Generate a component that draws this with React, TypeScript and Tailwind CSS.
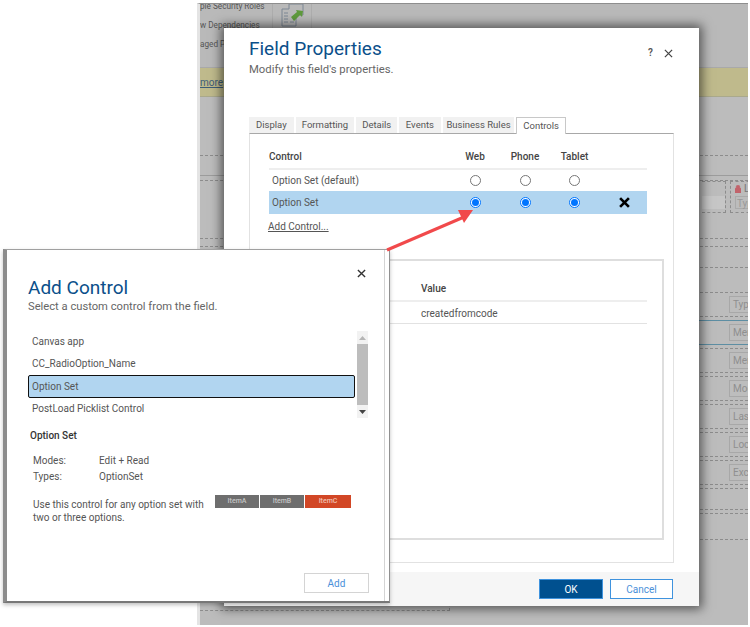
const font = { fontFamily: 'Roboto, "Open Sans", sans-serif' };

function Radio({ checked = false }: { checked?: boolean }) {
  if (checked) {
    return (
      <span className="flex h-[11px] w-[11px] items-center justify-center rounded-full border border-[#0075ff] bg-white">
        <span className="h-[7px] w-[7px] rounded-full bg-[#0075ff]" />
      </span>
    );
  }
  return <span className="block h-[11px] w-[11px] rounded-full border border-[#767676] bg-white" />;
}

function Close({ size = 9, width = 1.4, color = "#444" }: { size?: number; width?: number; color?: string }) {
  return (
    <svg width={size} height={size} viewBox="0 0 10 10" fill="none" stroke={color} strokeWidth={width}>
      <path d="M1 1L9 9M9 1L1 9" />
    </svg>
  );
}

function Tab({ label, width, active = false }: { label: string; width: string; active?: boolean }) {
  return (
    <div
      className={`flex h-[16px] items-center justify-center text-[9.5px] text-[#555] ${width} ${
        active ? "relative z-10 -mb-px h-[17px] border border-b-0 border-[#c8c8c8] bg-white" : "bg-[#f1f1f1]"
      }`}
    >
      {label}
    </div>
  );
}

function FieldRow({ label, first = "border-[#8c8c8c]", second = "border-[#8c8c8c]", firstStyle = "border-dashed", secondStyle = "border-dashed" }: { label: string; first?: string; second?: string; firstStyle?: string; secondStyle?: string }) {
  return (
    <>
      <div className={`flex h-[24px] shrink-0 items-center border-b ${firstStyle} ${first}`}>
        <div className="ml-[529px] flex h-[17px] w-[40px] shrink-0 items-center border border-[#a8a8a8] bg-[#bdbdbd] pl-[3px] text-[10px] text-[#8f8f8f]">
          {label}
        </div>
      </div>
      <div className={`h-[4px] shrink-0 border-b ${secondStyle} ${second}`} />
    </>
  );
}

function Background() {
  return (
    <div className="absolute left-[197px] top-[3px] flex h-[622px] w-[551px] flex-col overflow-hidden border-l-[3px] border-l-[#e4e4e4] border-t border-t-[#8e8e8e] bg-[#bcbcbc] text-[#555]">
      {/* ribbon */}
      <div className="flex h-[64px] shrink-0 border-b border-[#a9a9a9] bg-[#b9b9b9]">
        <div className="-mt-[5px] flex w-[72px] flex-col gap-[5px] whitespace-nowrap text-[8.2px] leading-[14px]">
          <span>ple Security Roles</span>
          <span>w Dependencies</span>
          <span>aged P</span>
        </div>
        <div className="flex w-[40px] justify-center border-x border-[#adadad]">
          <svg width="26" height="24" viewBox="0 0 26 24" fill="none">
            <path d="M10 0V5H3V22H17V14M10 0H24V11H17" stroke="#7d8794" />
            <path d="M5 9H9M5 12H9M5 15H9M5 18H9M11 18H15" stroke="#7d8794" />
            <path d="M12 13L18 8L17 6L24 7L23 13L21 11L15 17Z" fill="#5e9a3c" />
          </svg>
        </div>
      </div>
      <div className="flex h-[29px] shrink-0 items-center border-b border-[#aaa98c] bg-[#bfba8c] text-[10px] text-[#3d5d78] underline">
        more
      </div>
      {/* form sections */}
      <div className="h-[59px] shrink-0 border-b border-dashed border-[#8c8c8c]" />
      <div className="h-[20px] shrink-0 border-b border-[#9c9c9c]" />
      <div className="h-[5px] shrink-0 border-b border-dashed border-[#8c8c8c]" />
      <div className="flex h-[32px] shrink-0 items-center pl-[502px]">
        <div className="flex h-[32px] w-[26px] items-end border-y border-r border-dashed border-[#8c8c8c] pb-[3px]">
          <div className="h-[13px] w-[23px] bg-[#c6c6c6]" />
        </div>
        <div className="ml-[4px] flex h-[32px] w-[30px] flex-col border border-dashed border-[#8c8c8c] pl-[4px] text-[10px] leading-[13px] text-[#777]">
          <div className="flex items-center gap-[3px]">
            <svg width="6" height="8" viewBox="0 0 6 8">
              <path d="M0 3.5H6V8H0ZM1.2 3.5V2A1.8 1.8 0 0 1 4.8 2V3.5" fill="#c2636b" stroke="#c2636b" strokeWidth="0.7" />
            </svg>
            <span>L</span>
          </div>
          <div className="mt-[1px] h-[13px] border border-[#aaa] pl-[1px] text-[#999]">Typ</div>
        </div>
      </div>
      <div className="h-[26px] shrink-0 border-b border-dashed border-[#8c8c8c]" />
      <div className="h-[8px] shrink-0 border-b border-dashed border-[#8c8c8c]" />
      <div className="h-[21px] shrink-0 border-b border-dashed border-[#8c8c8c]" />
      <div className="h-[25px] shrink-0 border-b border-dashed border-[#8c8c8c]" />
      <FieldRow label="Type" second="border-[#5d8ea3]" secondStyle="border-solid" />
      <FieldRow label="Mem" first="border-[#5d8ea3]" firstStyle="border-solid" />
      <FieldRow label="Mem" />
      <FieldRow label="Mod" />
      <FieldRow label="Last" />
      <FieldRow label="Lock" />
      <FieldRow label="Excl" />
      <div className="h-[21px] shrink-0 border-b border-dashed border-[#8c8c8c]" />
      <div className="h-[4px] shrink-0 border-b border-dashed border-[#8c8c8c]" />
      <div className="h-[26px] shrink-0 border-b border-dashed border-[#8c8c8c]" />
      <div className="h-[71px] w-[250px] shrink-0 border-b border-r border-dashed border-[#8c8c8c]" />
    </div>
  );
}

function FieldProperties() {
  return (
    <div className="absolute left-[224px] top-[28px] flex h-[578px] w-[475px] flex-col bg-white shadow-[0_0_10px_3px_rgba(0,0,0,0.55)]">
      <div className="relative h-[89px] shrink-0 pl-[25px] pt-[7px]">
        <h1 className="text-[19px] leading-[28px] text-[#0b4f8a]">Field Properties</h1>
        <p className="text-[11.3px] leading-[14px] text-[#666]">Modify this field's properties.</p>
        <div className="absolute right-[26px] top-[20px] flex items-center gap-[11px] text-[10px] font-semibold leading-[10px] text-[#555]">
          <span>?</span>
          <Close />
        </div>
      </div>

      <div className="ml-[25px] flex w-[317px] shrink-0 gap-[2px]">
        <Tab label="Display" width="w-[45px]" />
        <Tab label="Formatting" width="w-[59px]" />
        <Tab label="Details" width="w-[41px]" />
        <Tab label="Events" width="w-[42px]" />
        <Tab label="Business Rules" width="w-[72px]" />
        <Tab label="Controls" width="w-[50px]" active />
      </div>

      <div className="ml-[25px] h-[430px] w-[425px] shrink-0 border border-[#e2e2e2] border-t-[#a8a8a8] pl-[19px]">
        <div className="w-[378px] text-[10px] text-[#555]">
          <div className="mt-[12px] grid h-[24px] grid-cols-[181px_50px_50px_49px_1fr] items-center border-b-2 border-[#eeeeee] font-medium text-[#444]">
            <span className="pb-[2px]">Control</span>
            <span className="pb-[2px] text-center">Web</span>
            <span className="pb-[2px] text-center">Phone</span>
            <span className="pb-[2px] text-center">Tablet</span>
            <span />
          </div>
          <div className="grid h-[21px] grid-cols-[181px_50px_50px_49px_1fr] items-center justify-items-center pb-[1px]">
            <span className="justify-self-start pl-[3px]">Option Set (default)</span>
            <Radio />
            <Radio />
            <Radio />
            <span />
          </div>
          <div className="grid h-[23px] grid-cols-[181px_50px_50px_49px_1fr] items-center justify-items-center bg-[#b1d5f0]">
            <span className="justify-self-start pl-[3px]">Option Set</span>
            <Radio checked />
            <Radio checked />
            <Radio checked />
            <span className="pl-[2px]">
              <Close size={11} width={2.4} color="#000" />
            </span>
          </div>
          <div className="-ml-[1px] mt-[6px] leading-[14px] text-[#555] underline">Add Control...</div>
        </div>

        <div className="-ml-[10px] mt-[25px] h-[281px] w-[405px] border-2 border-[#dedede] pl-[10px] pr-[15px] text-[10px] text-[#555]">
          <div className="h-[41px] border-b-2 border-[#eeeeee] pl-[150px] pt-[21px] font-medium leading-[14px] text-[#444]">Value</div>
          <div className="flex h-[22px] items-center border-b border-[#e2e2e2] pl-[150px] pt-[2px]">createdfromcode</div>
        </div>
      </div>

      <div className="mt-[9px] flex flex-1 items-center justify-end gap-[7px] bg-[#f6f6f6] pr-[26px] text-[10px]">
        <button className="h-[20px] w-[64px] border border-[#3f93de] bg-[#00508f] text-white">OK</button>
        <button className="h-[20px] w-[63px] border border-[#3f93de] bg-white text-[#4a90d9]">Cancel</button>
      </div>
    </div>
  );
}

function AddControl() {
  return (
    <div className="absolute left-[3px] top-[249px] flex h-[354px] w-[387px] flex-col border-b-2 border-l-4 border-r border-t border-b-[#777] border-l-[#8c8c8c] border-r-[#909090] border-t-[#a0a0a0] bg-white shadow-[0_2px_4px_rgba(0,0,0,0.25)]">
      <div className="relative flex h-full w-[378px] flex-col border-r border-[#d4d4d4] text-[10px] text-[#555]">
        <div className="absolute right-[18px] top-[19px]">
          <Close size={9} width={1.5} color="#333" />
        </div>
        <div className="pl-[21px] pt-[24px]">
          <h2 className="text-[19px] leading-[28px] text-[#0b4f8a]">Add Control</h2>
          <p className="-mt-[2px] text-[11.2px] leading-[14px] text-[#666]">Select a custom control from the field.</p>
        </div>

        <div className="ml-[21px] mt-[17px] flex h-[87px] w-[340px]">
          <ul className="w-[327px] leading-[14px]">
            <li className="flex h-[22px] items-center pl-[4px]">Canvas app</li>
            <li className="flex h-[22px] items-center pl-[4px]">CC_RadioOption_Name</li>
            <li className="flex h-[23px] items-center rounded-[2px] border border-[#111] bg-[#b1d5f0] pl-[3px]">Option Set</li>
            <li className="flex h-[22px] items-center pl-[4px]">PostLoad Picklist Control</li>
          </ul>
          <div className="ml-[2px] flex w-[11px] flex-col items-center bg-[#f2f2f2]">
            <svg className="mt-[5px]" width="7" height="4" viewBox="0 0 7 4"><path d="M3.5 0L7 4H0Z" fill="#b5b5b5" /></svg>
            <div className="mt-[4px] h-[61px] w-full bg-[#bdbdbd]" />
            <svg className="mt-[5px]" width="7" height="4" viewBox="0 0 7 4"><path d="M3.5 4L7 0H0Z" fill="#444" /></svg>
          </div>
        </div>

        <div className="pl-[23px] pt-[11px] font-medium leading-[14px] text-[#333]">Option Set</div>
        <dl className="mt-[10px] grid grid-cols-[66px_1fr] pl-[26px] leading-[16px]">
          <dt>Modes:</dt>
          <dd>Edit + Read</dd>
          <dt>Types:</dt>
          <dd>OptionSet</dd>
        </dl>
        <div className="mt-[10px] flex pl-[26px]">
          <p className="w-[182px] pt-[3px] leading-[13px]">Use this control for any option set with two or three options.</p>
          <div className="flex h-[13px] w-[136px] text-[7px] font-medium leading-[13px] text-[#c4c4c4]">
            <span className="w-[45px] border-r border-white bg-[#6e6e6e] text-center">ItemA</span>
            <span className="w-[45px] border-r border-white bg-[#6e6e6e] text-center">ItemB</span>
            <span className="w-[46px] bg-[#d24726] text-center text-[#f0c0b0]">ItemC</span>
          </div>
        </div>

        <div className="mt-auto flex justify-end pb-[8px] pr-[15px]">
          <button className="h-[20px] w-[65px] border border-[#d4d4d4] bg-white text-[10px] text-[#4a90d9]">Add</button>
        </div>
      </div>
    </div>
  );
}

export default function App() {
  return (
    <div className="relative h-[627px] w-[750px] overflow-hidden bg-white" style={font}>
      <Background />
      <FieldProperties />
      <AddControl />
      {/* callout arrow */}
      <svg className="absolute left-[380px] top-[205px]" width="100" height="50" viewBox="0 0 100 50" fill="none">
        <path d="M7 45L84 12" stroke="#f1494b" strokeWidth="3" />
        <path d="M93 5L78 5L84 18Z" fill="#f1494b" />
      </svg>
    </div>
  );
}
